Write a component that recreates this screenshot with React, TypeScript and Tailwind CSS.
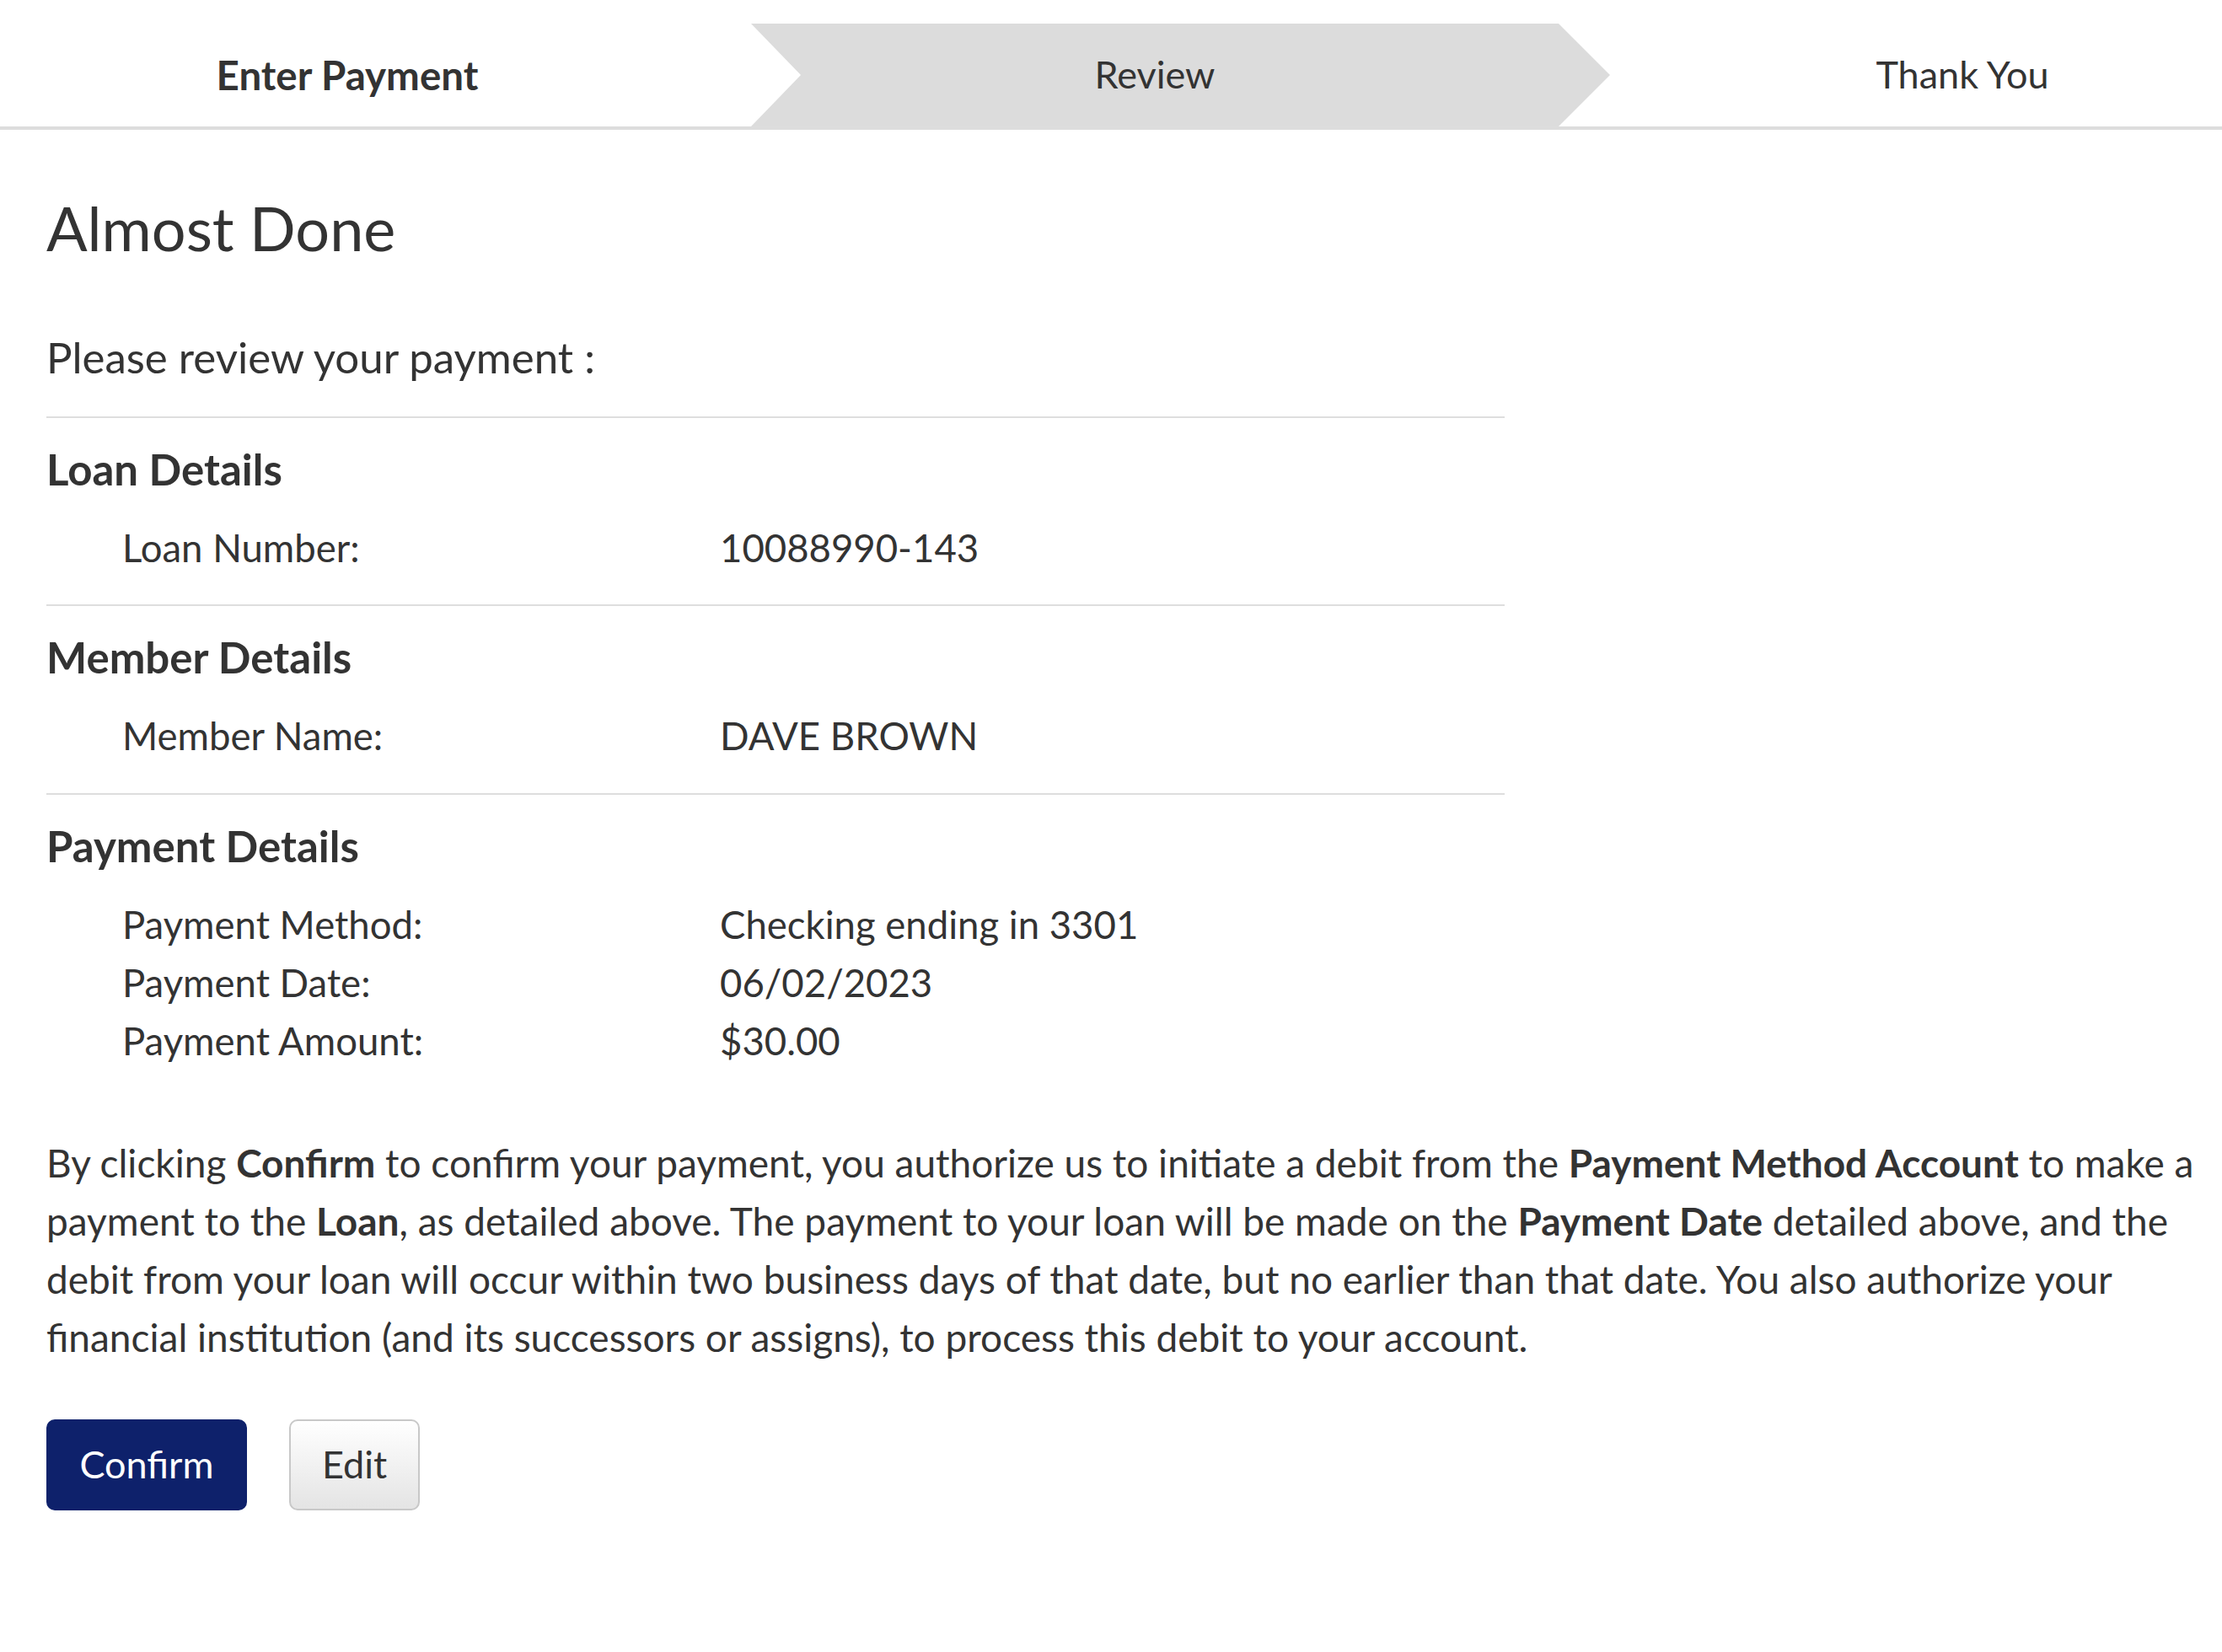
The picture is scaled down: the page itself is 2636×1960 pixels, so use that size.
import * as React from "react";

const FONT = "font-['Lato','Noto_Sans',sans-serif]";

function Stepper() {
  return (
    <div className="overflow-hidden border-b-[4px] border-[#dddddd] pt-[28px]">
      <div className="-ml-[67px] flex h-[122px] text-[45px] text-[#333333]">
        <div className="flex w-[958px] shrink-0 items-center justify-center text-[47.5px] font-bold">
          Enter Payment
        </div>
        <div className="relative z-10 -mr-[61px] flex w-[1019px] shrink-0 items-center justify-center bg-[#dcdcdc] pr-[61px] [clip-path:polygon(0_0,958px_0,100%_50%,958px_100%,0_100%,59px_50%)]">
          Review
        </div>
        <div className="flex w-[958px] shrink-0 items-center justify-center">Thank You</div>
      </div>
    </div>
  );
}

function Row({ label, value }: { label: string; value: string }) {
  return (
    <div className="flex pl-[90px] text-[45.5px] leading-[69px]">
      <div className="w-[709px] shrink-0">{label}</div>
      <div>{value}</div>
    </div>
  );
}

function Section({
  title,
  children,
  gapBottom,
}: {
  title: string;
  children: React.ReactNode;
  gapBottom?: string;
}) {
  return (
    <section className={`border-t-2 border-[#dedede] pt-[30px] ${gapBottom ?? ""}`}>
      <h3 className="text-[51px] font-bold leading-[61px]">{title}</h3>
      <div className="mt-[28px]">{children}</div>
    </section>
  );
}

export default function App() {
  return (
    <div className={`min-h-screen bg-white text-[#333333] ${FONT}`}>
      <Stepper />
      <main className="px-[55px]">
        <h1 className="mt-[69px] text-[72px] leading-[95px]">Almost Done</h1>
        <p className="mt-[74px] text-[51px] leading-[64px]">Please review your payment :</p>

        <div className="mt-[38px] w-[1730px]">
          <Section title="Loan Details" gapBottom="pb-[33px]">
            <Row label="Loan Number:" value="10088990-143" />
          </Section>
          <Section title="Member Details" gapBottom="pb-[34px]">
            <Row label="Member Name:" value="DAVE BROWN" />
          </Section>
          <Section title="Payment Details">
            <Row label="Payment Method:" value="Checking ending in 3301" />
            <Row label="Payment Date:" value="06/02/2023" />
            <Row label="Payment Amount:" value="$30.00" />
          </Section>
        </div>

        <p className="mt-[76px] whitespace-nowrap text-[46px] leading-[69px]">
          By clicking <b>Confirm</b> to confirm your payment, you authorize us to initiate a debit
          from the <b>Payment Method Account</b> to make a
          <br />
          payment to the <b>Loan</b>, as detailed above. The payment to your loan will be made on
          the <b>Payment Date</b> detailed above, and the
          <br />
          debit from your loan will occur within two business days of that date, but no earlier
          than that date. You also authorize your
          <br />
          financial institution (and its successors or assigns), to process this debit to your
          account.
        </p>

        <div className="mt-[63px] flex gap-[50px] pb-[150px]">
          <button className="h-[108px] w-[238px] rounded-[10px] bg-[#0e216b] text-[45px] text-white">
            Confirm
          </button>
          <button className="h-[108px] w-[155px] rounded-[10px] border-2 border-[#c8c8c8] bg-gradient-to-b from-white to-[#e4e4e4] text-[45px] text-[#333333]">
            Edit
          </button>
        </div>
      </main>
    </div>
  );
}
